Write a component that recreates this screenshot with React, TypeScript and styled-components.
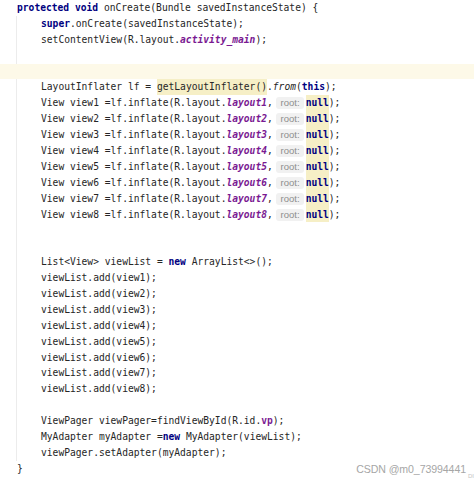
import React from "react";
import styled, { createGlobalStyle } from "styled-components";

const Global = createGlobalStyle`
  html, body { margin: 0; padding: 0; background: #ffffff; }
  #root { width: 474px; height: 479px; overflow: hidden; }
`;

const LH = 15.9;

const Editor = styled.div`
  position: relative;
  width: 474px;
  height: 479px;
  background: #ffffff;
  font-family: "DejaVu Sans Mono", "Liberation Mono", monospace;
  font-size: 9.65px;
  color: #262626;
  overflow: hidden;
`;

const Line = styled.div`
  height: ${LH}px;
  line-height: ${LH}px;
  white-space: pre;
  padding-left: 17px;
`;

const Body = styled.div`
  margin-left: 16px;
  border-left: 1px solid #ececec;
`;

const BodyLine = styled.div<{ $current?: boolean }>`
  height: ${LH}px;
  line-height: ${LH}px;
  white-space: pre;
  padding-left: ${(p) => (p.$current ? 41 : 24)}px;
  margin-left: ${(p) => (p.$current ? -17 : 0)}px;
  background: ${(p) => (p.$current ? "#fdf9e8" : "transparent")};
`;

const Kw = styled.span`
  color: #000080;
  font-weight: bold;
`;

const Field = styled.span<{ $italic?: boolean }>`
  color: #7a1a92;
  font-weight: bold;
  font-style: ${(p) => (p.$italic ? "italic" : "normal")};
`;

const StaticCall = styled.span`
  font-style: italic;
`;

const Usage = styled.span`
  background: #f6efc6;
  display: inline-block;
  height: ${LH}px;
  line-height: ${LH}px;
  vertical-align: top;
`;

const Hint = styled.span`
  display: inline-block;
  font-family: "Liberation Sans", Arial, sans-serif;
  font-size: 9.5px;
  color: #8e8e8e;
  background: #f1f1f1;
  border-radius: 3px;
  height: 12px;
  line-height: 12px;
  padding: 0 4px 0 5px;
  margin: 2px 2px 0 -3px;
  vertical-align: top;
`;

const Watermark = styled.div`
  position: absolute;
  right: 8px;
  bottom: 4px;
  font-family: "Liberation Sans", Arial, sans-serif;
  font-size: 10.6px;
  color: #a6a6a6;
  letter-spacing: -0.1px;
`;

const Corner = styled.div`
  position: absolute;
  right: 0px;
  bottom: 0px;
  font-family: "Liberation Sans", Arial, sans-serif;
  font-size: 6px;
  line-height: 6px;
  color: #c4c4c4;
`;

const nums = [1, 2, 3, 4, 5, 6, 7, 8];

export default function App() {
  return (
    <>
      <Global />
      <Editor>
        <Line>
          <Kw>protected</Kw>{" "}<Kw>void</Kw>{" onCreate(Bundle savedInstanceState) {"}
        </Line>
        <Body>
          <BodyLine>
            <Kw>super</Kw>.onCreate(savedInstanceState);
          </BodyLine>
          <BodyLine>
            setContentView(R.layout.<Field $italic>activity_main</Field>);
          </BodyLine>
          <BodyLine />
          <BodyLine $current />
          <BodyLine>
            {"LayoutInflater lf = "}<Usage>getLayoutInflater()</Usage>.<StaticCall>from</StaticCall>(<Kw>this</Kw>);
          </BodyLine>
          {nums.map((n) => (
            <BodyLine key={"v" + n}>
              View view{n} =lf.inflate(R.layout.<Field $italic>layout{n}</Field>{", "}<Hint>root:</Hint>
              <Usage>
                <Kw>null</Kw>
              </Usage>
              );
            </BodyLine>
          ))}
          <BodyLine />
          <BodyLine />
          <BodyLine>
            {"List<View> viewList = "}<Kw>new</Kw>{" ArrayList<>();"}
          </BodyLine>
          {nums.map((n) => (
            <BodyLine key={"a" + n}>viewList.add(view{n});</BodyLine>
          ))}
          <BodyLine />
          <BodyLine>
            ViewPager viewPager=findViewById(R.id.<Field>vp</Field>);
          </BodyLine>
          <BodyLine>
            {"MyAdapter myAdapter ="}<Kw>new</Kw>{" MyAdapter(viewList);"}
          </BodyLine>
          <BodyLine>viewPager.setAdapter(myAdapter);</BodyLine>
        </Body>
        <Line>{"}"}</Line>
        <Watermark>CSDN @m0_73994441</Watermark>
        <Corner>DI</Corner>
      </Editor>
    </>
  );
}
